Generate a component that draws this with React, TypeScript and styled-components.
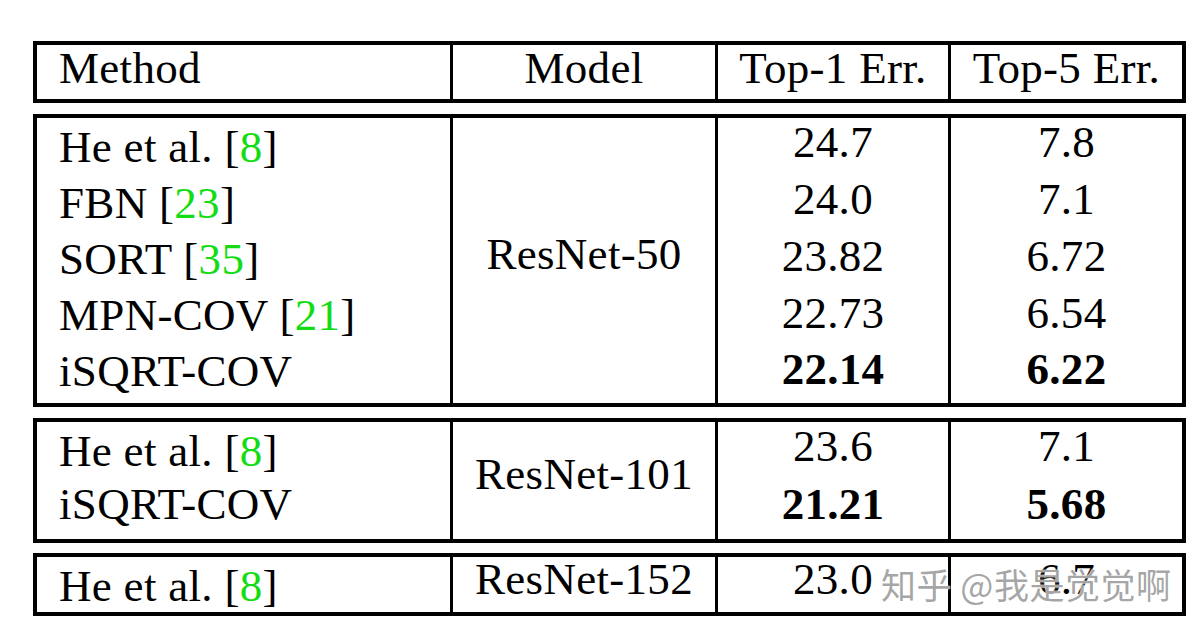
import React from "react";
import styled, { createGlobalStyle } from "styled-components";

interface Method {
  name: string;
  cite?: string;
}

interface Score {
  value: string;
  best?: boolean;
}

interface Group {
  space: number;
  height: number;
  methods: Method[];
  model: string;
  top1: Score[];
  top5: Score[];
  methodTop: number;
  methodGap: number;
  modelTop: number;
  scoreTop: number;
  scoreGap: number;
}

const groups: Group[] = [
  {
    space: 11,
    height: 293,
    methods: [
      { name: "He et al.", cite: "8" },
      { name: "FBN", cite: "23" },
      { name: "SORT", cite: "35" },
      { name: "MPN-COV", cite: "21" },
      { name: "iSQRT-COV" },
    ],
    model: "ResNet-50",
    top1: [
      { value: "24.7" },
      { value: "24.0" },
      { value: "23.82" },
      { value: "22.73" },
      { value: "22.14", best: true },
    ],
    top5: [
      { value: "7.8" },
      { value: "7.1" },
      { value: "6.72" },
      { value: "6.54" },
      { value: "6.22", best: true },
    ],
    methodTop: 7.3,
    methodGap: 11,
    modelTop: 114.3,
    scoreTop: 2.3,
    scoreGap: 11.75,
  },
  {
    space: 11,
    height: 125,
    methods: [{ name: "He et al.", cite: "8" }, { name: "iSQRT-COV" }],
    model: "ResNet-101",
    top1: [{ value: "23.6" }, { value: "21.21", best: true }],
    top5: [{ value: "7.1" }, { value: "5.68", best: true }],
    methodTop: 7.3,
    methodGap: 8,
    modelTop: 30.3,
    scoreTop: 2.3,
    scoreGap: 13,
  },
  {
    space: 10,
    height: 63,
    methods: [{ name: "He et al.", cite: "8" }],
    model: "ResNet-152",
    top1: [{ value: "23.0" }],
    top5: [{ value: "6.7" }],
    methodTop: 7.3,
    methodGap: 0,
    modelTop: 0.3,
    scoreTop: 0.3,
    scoreGap: 0,
  },
];

export default function App() {
  return (
    <>
      <GlobalStyle />
      <Page>
        <Block $space={0} $height={62}>
          <Cell $align="left" $top={1.3}>
            Method
          </Cell>
          <Cell $align="center" $top={1.3}>
            Model
          </Cell>
          <Cell $align="center" $top={1.3}>
            Top-1 Err.
          </Cell>
          <Cell $align="center" $top={1.3}>
            Top-5 Err.
          </Cell>
        </Block>

        {groups.map((g) => (
          <Block key={g.model} $space={g.space} $height={g.height}>
            <Cell $align="left" $top={g.methodTop} $gap={g.methodGap}>
              {g.methods.map((m) => (
                <Line key={m.name}>
                  {m.name}
                  {m.cite && (
                    <>
                      {" "}[<Cite>{m.cite}</Cite>]
                    </>
                  )}
                </Line>
              ))}
            </Cell>
            <Cell $align="center" $top={g.modelTop}>
              <Line>{g.model}</Line>
            </Cell>
            <Cell $align="center" $top={g.scoreTop} $gap={g.scoreGap}>
              {g.top1.map((s, i) => (
                <Line key={i} $bold={s.best}>
                  {s.value}
                </Line>
              ))}
            </Cell>
            <Cell $align="center" $top={g.scoreTop} $gap={g.scoreGap}>
              {g.top5.map((s, i) => (
                <Line key={i} $bold={s.best}>
                  {s.value}
                </Line>
              ))}
            </Cell>
          </Block>
        ))}

        <Watermark>知乎 @我是觉觉啊</Watermark>
      </Page>
    </>
  );
}

const GlobalStyle = createGlobalStyle`
  html, body {
    margin: 0;
    padding: 0;
    background: #ffffff;
  }
`;

const Page = styled.div`
  position: relative;
  width: 1203px;
  height: 637px;
  box-sizing: border-box;
  padding: 41px 0 0 33px;
  display: flex;
  flex-direction: column;
  font-family: "Liberation Serif", "Times New Roman", serif;
  font-size: 45px;
  letter-spacing: 0.3px;
  color: #000000;
  overflow: hidden;
`;

const Block = styled.div<{ $space: number; $height: number }>`
  display: grid;
  grid-template-columns: 413px 265px 233px 234px;
  width: 1153px;
  height: ${(p) => p.$height}px;
  margin-top: ${(p) => p.$space}px;
  box-sizing: border-box;
  border: 4px solid #000000;
`;

const Cell = styled.div<{ $align: "left" | "center"; $top: number; $gap?: number }>`
  display: flex;
  flex-direction: column;
  align-items: ${(p) => (p.$align === "left" ? "flex-start" : "center")};
  gap: ${(p) => p.$gap ?? 0}px;
  padding: ${(p) => p.$top}px 0 0 ${(p) => (p.$align === "left" ? 22 : 0)}px;
  line-height: 45px;
  white-space: nowrap;
  box-sizing: border-box;
  min-width: 0;

  & + & {
    border-left: 3px solid #000000;
  }
`;

const Line = styled.div<{ $bold?: boolean }>`
  height: 45px;
  font-weight: ${(p) => (p.$bold ? 700 : 400)};
`;

const Cite = styled.span`
  color: #14dc14;
`;

const Watermark = styled.div`
  position: absolute;
  left: 881px;
  top: 566px;
  font-family: "Noto Sans CJK SC", "Noto Sans", sans-serif;
  font-size: 35px;
  line-height: 35px;
  letter-spacing: 0.5px;
  color: rgba(150, 150, 150, 0.85);
  text-shadow: 0 0 1px #ffffff, 0 0 2px #ffffff;
  white-space: nowrap;
  pointer-events: none;
`;
